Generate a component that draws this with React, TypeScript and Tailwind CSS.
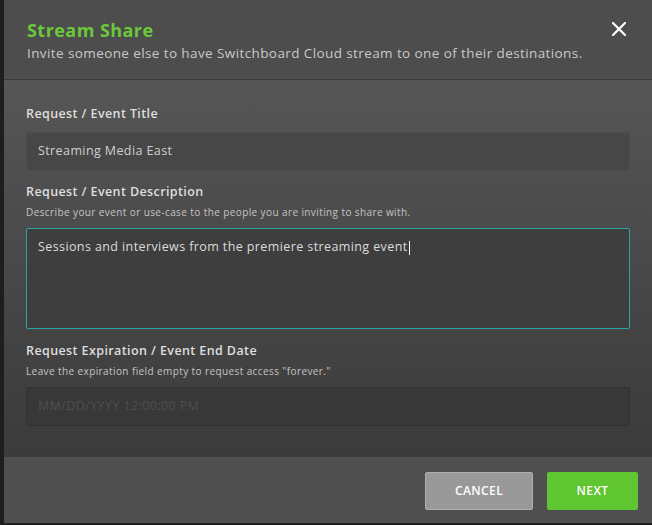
const App = () => {
  return (
    <div
      className="w-[652px] h-[525px] bg-[#1e1e1e] pl-[4px] overflow-hidden tracking-[0.4px]"
      style={{ fontFamily: '"Open Sans", "Liberation Sans", sans-serif' }}
    >
      <div className="h-[523px] flex flex-col bg-[#4c4c4c]">
        <div className="h-[80px] border-b border-[#3a3a3a] bg-[#4d4d4d] px-[23px] pt-[18px] relative">
          <h1 className="text-[18px] leading-[24px] font-bold text-[#6bc83b] tracking-wide">Stream Share</h1>
          <p className="text-[13.5px] leading-[20px] text-[#c8c8c8] mt-[1px]">
            Invite someone else to have Switchboard Cloud stream to one of their destinations.
          </p>
          <button className="absolute right-[26px] top-[22px] text-white">
            <svg width="14" height="14" viewBox="0 0 14 14" stroke="currentColor" strokeWidth="2.2" strokeLinecap="round">
              <path d="M1 1L13 13M13 1L1 13" />
            </svg>
          </button>
        </div>
        <div className="flex-1 bg-gradient-to-b from-[#565656] to-[#3b3b3b] px-[22px] pt-[25px]">
          <label className="block text-[12.5px] font-semibold text-[#dedede] leading-[18px]">Request / Event Title</label>
          <div className="mt-[9px] h-[39px] bg-[#474747] rounded-[2px] border border-[#4e4e4e] px-[11px] flex items-center text-[12.5px] text-[#d0d0d0]">
            Streaming Media East
          </div>
          <label className="block mt-[12px] text-[12.5px] font-semibold text-[#dedede] leading-[18px]">Request / Event Description</label>
          <p className="text-[10px] text-[#c4c4c4] leading-[16px] mt-[3px]">
            Describe your event or use-case to the people you are inviting to share with.
          </p>
          <div className="mt-[8px] h-[101px] bg-[#3e3e3e] rounded-[2px] border border-[#2ba3a3] px-[11px] pt-[9px] text-[12.5px] text-[#dcdcdc]">
            Sessions and interviews from the premiere streaming event<span className="inline-block w-px h-[14px] bg-white align-middle ml-[1px]" />
          </div>
          <label className="block mt-[13px] text-[12.5px] font-semibold text-[#dedede] leading-[18px]">Request Expiration / Event End Date</label>
          <p className="text-[10px] text-[#c4c4c4] leading-[16px] mt-[3px]">
            Leave the expiration field empty to request access "forever."
          </p>
          <div className="mt-[8px] h-[39px] bg-[#383838] rounded-[2px] border border-dotted border-[#2c2c2c] px-[11px] flex items-center text-[12.5px] text-[#4f4f4f]">
            MM/DD/YYYY 12:00:00 PM
          </div>
        </div>
        <div className="h-[67px] bg-[#4f4f4f] border-t border-[#3d3d3d] flex items-center justify-end gap-[14px] pr-[14px] pt-[2px]">
          <button className="w-[108px] h-[38px] bg-[#999] border border-[#b0b0b0] rounded-[2px] text-white text-[12px] font-semibold">
            CANCEL
          </button>
          <button className="w-[91px] h-[38px] bg-[#5fc531] rounded-[2px] text-white text-[12px] font-semibold">
            NEXT
          </button>
        </div>
      </div>
    </div>
  );
};

export default App;
